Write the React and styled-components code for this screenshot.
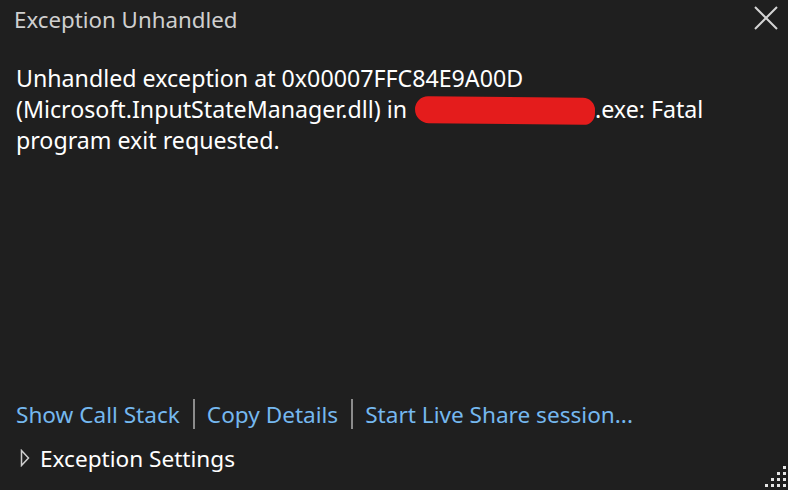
import React from 'react';
import styled, {createGlobalStyle} from 'styled-components';

const GlobalStyle = createGlobalStyle`
  html, body {
    margin: 0;
    padding: 0;
    background: #1f1f1f;
  }
  body {
    font-family: "Noto Sans", "Open Sans", sans-serif;
  }
`;

const Dialog = styled.div`
  position: relative;
  width: 788px;
  height: 490px;
  box-sizing: border-box;
  background: #1f1f1f;
  display: flex;
  flex-direction: column;
  overflow: hidden;
`;

const Header = styled.div`
  display: flex;
  align-items: center;
  justify-content: space-between;
  height: 40px;
  padding: 0 6px 0 14px;
`;

const Title = styled.h1`
  margin: 0;
  font-size: 22.3px;
  font-weight: 400;
  color: #cfcfcf;
  line-height: 40px;
`;

const CloseBtn = styled.button`
  width: 32px;
  height: 32px;
  border: 0;
  padding: 0;
  background: transparent;
  display: flex;
  align-items: center;
  justify-content: center;
  margin-top: -4px;
`;

const Message = styled.div`
  margin-top: 23px;
  padding: 0 16px;
  max-width: 700px;
  font-size: 23.2px;
  line-height: 31px;
  color: #ffffff;
`;

const Line = styled.div`
  white-space: nowrap;
`;

const Redacted = styled.span`
  display: inline-block;
  width: 180px;
  height: 27px;
  margin: 0 0 0 2px;
  vertical-align: -6px;
  background: #e41c1c;
  border-radius: 14px 13px 12px 15px;
  transform: rotate(0.6deg);
`;

const Spacer = styled.div`
  flex: 1;
`;

const Links = styled.div`
  display: flex;
  align-items: center;
  padding: 0 16px;
  height: 32px;
`;

const Link = styled.a`
  font-size: 22.6px;
  color: #75b8ef;
  text-decoration: none;
  cursor: pointer;
`;

const Divider = styled.span`
  width: 2px;
  height: 30px;
  background: #8c8c8c;
  margin: 0 12px 0 13px;
`;

const Settings = styled.div`
  display: flex;
  align-items: center;
  gap: 10px;
  padding: 0 20px;
  height: 34px;
  margin: 11px 0 15px;
  font-size: 22.6px;
  color: #ffffff;
`;

const Grip = styled.svg`
  position: absolute;
  right: 1px;
  bottom: 2px;
`;

const gripDots = [];
for (let r = 0; r < 4; r++) {
  for (let c = 3 - r; c < 4; c++) {
    gripDots.push({x: c * 6, y: r * 6});
  }
}

const App = () => (
  <>
    <GlobalStyle />
    <Dialog>
      <Header>
        <Title>Exception Unhandled</Title>
        <CloseBtn aria-label="Close">
          <svg width="24" height="24" viewBox="0 0 24 24">
            <path d="M1 1 L23 23 M23 1 L1 23" stroke="#d4d4d4" strokeWidth="2" />
          </svg>
        </CloseBtn>
      </Header>
      <Message>
        <Line>Unhandled exception at 0x00007FFC84E9A00D</Line>
        <Line>
          (Microsoft.InputStateManager.dll) in <Redacted />.exe: Fatal
        </Line>
        <Line>program exit requested.</Line>
      </Message>
      <Spacer />
      <Links>
        <Link>Show Call Stack</Link>
        <Divider />
        <Link>Copy Details</Link>
        <Divider />
        <Link>Start Live Share session...</Link>
      </Links>
      <Settings>
        <svg width="10" height="18" viewBox="0 0 10 18">
          <path d="M1.5 1.5 L8.5 9 L1.5 16.5 Z" fill="none" stroke="#cfcfcf" strokeWidth="1.5" />
        </svg>
        Exception Settings
      </Settings>
      <Grip width="22" height="22" viewBox="0 0 22 22">
        {gripDots.map((d, i) => (
          <rect key={i} x={d.x} y={d.y} width="3" height="3" fill="#e6e6e6" />
        ))}
      </Grip>
    </Dialog>
  </>
);

export default App;
